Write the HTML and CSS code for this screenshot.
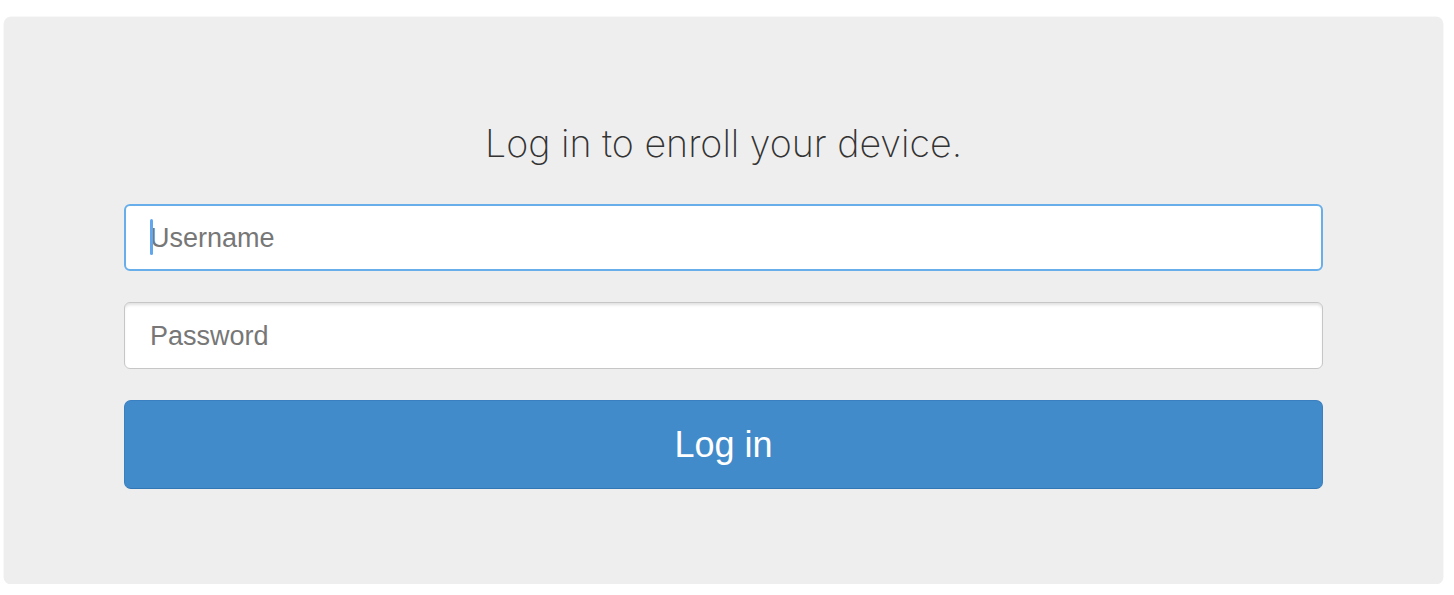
FILE: index.html
```html
<!DOCTYPE html>
<html lang="en">
<head>
<meta charset="utf-8">
<title>Log in</title>
<link rel="stylesheet" href="styles.css">
</head>
<body>
<div class="panel">
  <h1 class="title">Log in to enroll your device.</h1>
  <form class="form">
    <div class="field field-focus">
      <input class="input" type="text" placeholder="Username">
      <span class="caret"></span>
    </div>
    <div class="field">
      <input class="input" type="password" placeholder="Password">
    </div>
    <button class="btn" type="button">Log in</button>
  </form>
</div>
</body>
</html>
```
FILE: styles.css
```css
html, body {
  margin: 0;
  padding: 0;
  background: #ffffff;
}
body {
  padding: 17px 11px 0 4px;
  font-family: "Liberation Sans", Arial, sans-serif;
}
.panel {
  background: #eeeeee;
  border-radius: 7px;
  box-shadow: 0 0 0 0.5px rgba(0,0,0,0.06);
  padding: 104px 120px 95px 120px;
  box-sizing: border-box;
  height: 567px;
}
.title {
  margin: 0 0 35px 0;
  height: 48px;
  line-height: 46px;
  text-align: center;
  font-family: Inter, Roboto, "Liberation Sans", sans-serif;
  font-weight: 200;
  font-size: 37.6px;
  color: #333333;
  letter-spacing: 0;
}
.form {
  display: flex;
  flex-direction: column;
  gap: 31px;
}
.field {
  position: relative;
  height: 67px;
}
.input {
  display: block;
  width: 100%;
  height: 67px;
  box-sizing: border-box;
  margin: 0;
  padding: 1px 25px 0 25px;
  border: 1px solid #c6c6c6;
  border-radius: 6px;
  background: #ffffff;
  font-family: "Liberation Sans", Arial, sans-serif;
  font-size: 27px;
  color: #555555;
  outline: none;
  box-shadow: inset 0 3px 3px -1px rgba(0,0,0,0.12);
}
.input::placeholder {
  color: #777777;
  opacity: 1;
}
.field-focus .input {
  border: 2px solid #68aeea;
  padding: 1px 24px 0 24px;
  box-shadow: none;
}
.caret {
  position: absolute;
  left: 26px;
  top: 15px;
  width: 3px;
  height: 36px;
  border-radius: 2px;
  background: #62a6ee;
}
.btn {
  display: block;
  width: 100%;
  height: 89px;
  margin: 0;
  padding: 0;
  border: 1px solid #3a7fbf;
  border-bottom-color: #3277b5;
  border-radius: 7px;
  background: #428bca;
  color: #ffffff;
  font-family: "Liberation Sans", Arial, sans-serif;
  font-size: 36px;
  cursor: pointer;
}
```
